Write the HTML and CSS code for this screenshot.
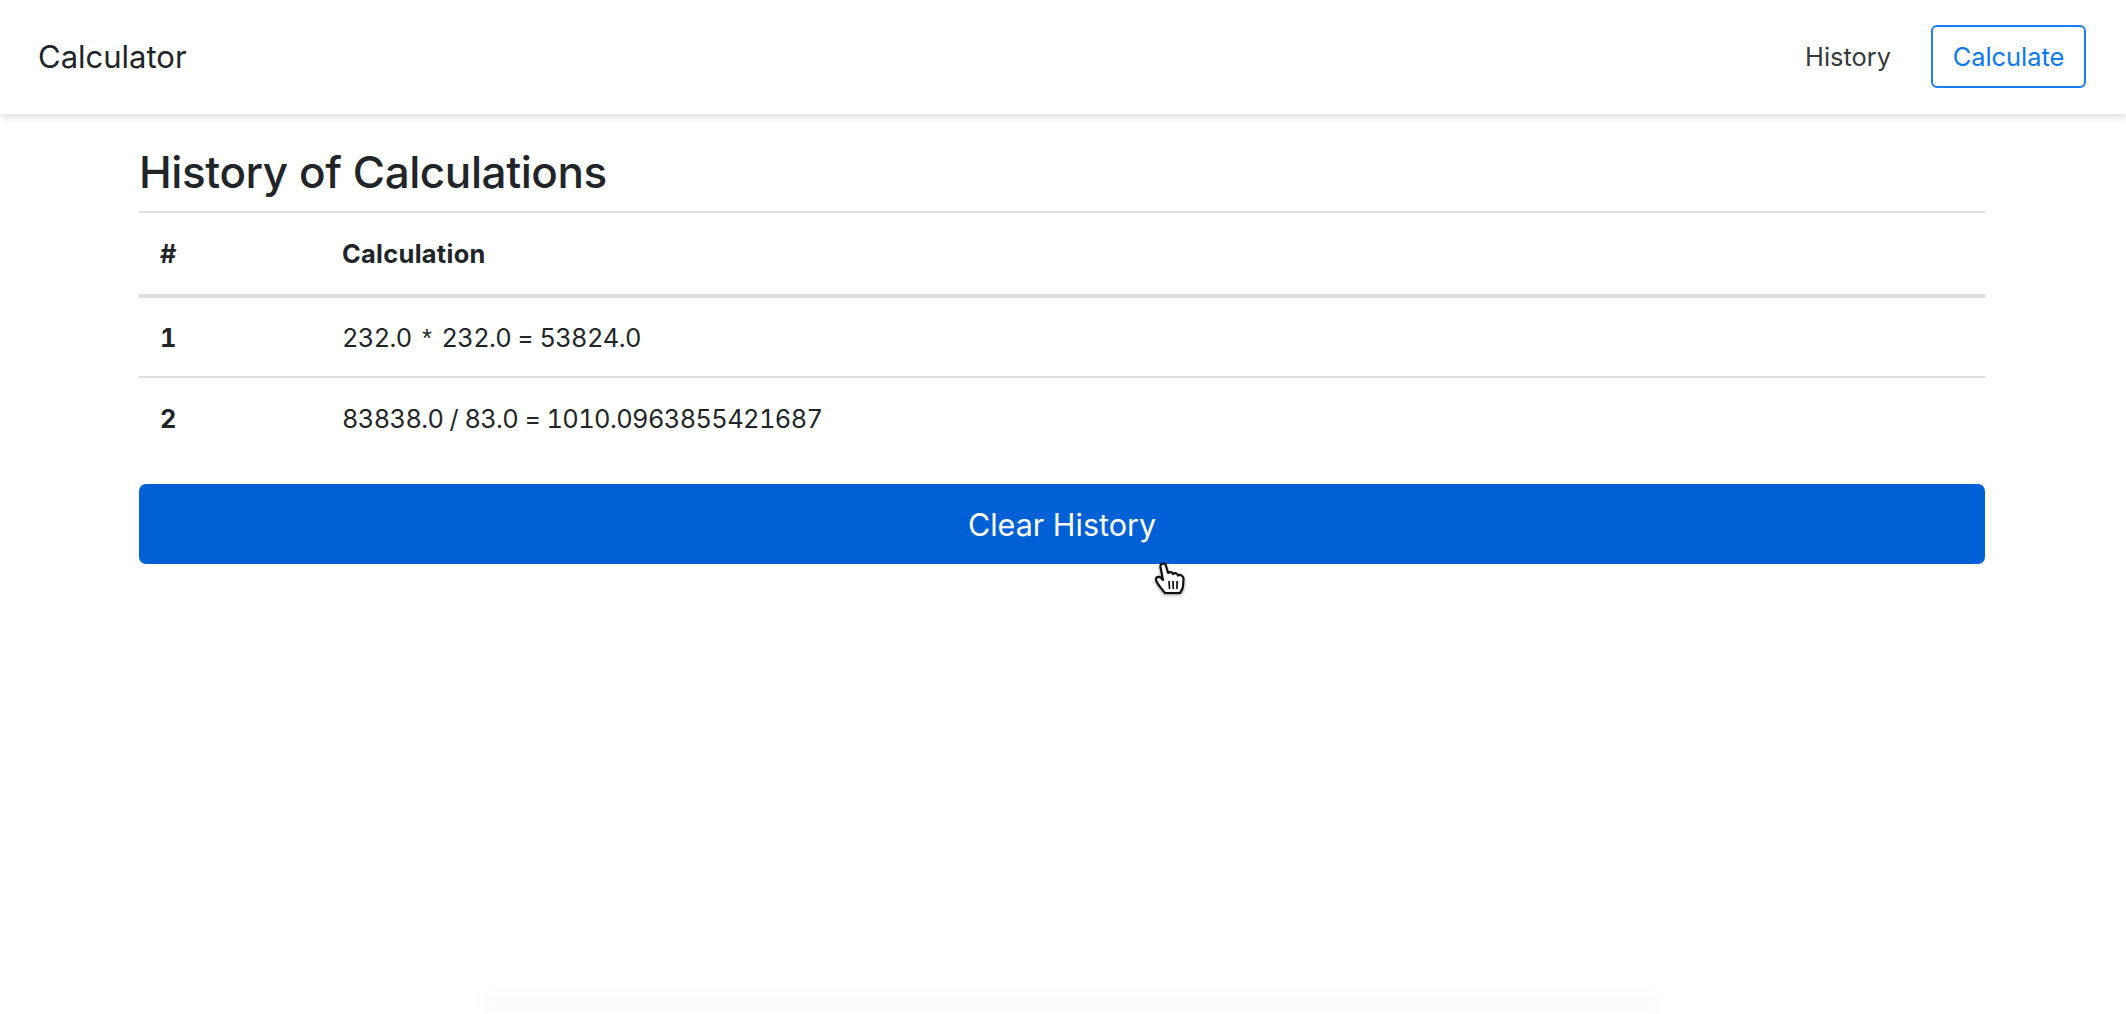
FILE: index.html
```html
<!DOCTYPE html>
<html lang="en">
<head>
<meta charset="utf-8">
<title>Calculator</title>
<link rel="stylesheet" href="styles.css">
</head>
<body>
<header class="navbar">
  <a class="brand" href="#">Calculator</a>
  <nav class="nav">
    <a class="nav-link" href="#">History</a>
    <a class="nav-btn" href="#">Calculate</a>
  </nav>
</header>
<main class="container">
  <h1 class="title">History of Calculations</h1>
  <table class="table">
    <thead>
      <tr><th class="col-num">#</th><th>Calculation</th></tr>
    </thead>
    <tbody>
      <tr><th class="col-num">1</th><td>232.0 <span class="op">*</span> 232.0 = 53824.0</td></tr>
      <tr><th class="col-num">2</th><td>83838.0 / 83.0 = 1010.0963855421687</td></tr>
    </tbody>
  </table>
  <button class="clear" type="button">Clear History</button>
</main>
<svg class="cursor" viewBox="0 0 30 34" width="30" height="34" aria-hidden="true">
  <path class="cursor-hand" d="M10 32 C7 28 2 23 1 19 C.5 16 4 15 6 17 L8 19 L5.5 6 C5 2 10.5 1.5 11 5 L13 12 C15 10.5 17 11 18 13 C20 11.5 22 12 23 14.5 C25.5 13 28.5 15 28.5 18 L28 25 C28 28 26 30 25 32 Z"/>
  <path class="cursor-lines" d="M14 20 L14.5 28 M18 20 L18.3 28 M22 20 L22 28"/>
</svg>
<div class="bottom-glow"></div>
</body>
</html>
```

FILE: styles.css
```css
* { box-sizing: border-box; }
html, body { height: 100%; }
body {
  margin: 0;
  background: #fff;
  color: #212529;
  font-family: Inter, "Liberation Sans", sans-serif;
  font-size: 25.4px;
  overflow: hidden;
  position: relative;
}
a { text-decoration: none; color: inherit; }

.navbar {
  height: 114px;
  display: flex;
  align-items: center;
  justify-content: space-between;
  padding: 0 40px 2px 38px;
  background: #fff;
  box-shadow: 0 2px 9px rgba(0, 0, 0, .16);
}
.brand { font-size: 31px; }
.nav { display: flex; align-items: center; gap: 40px; }
.nav-link { color: #343a40; }
.nav-btn {
  width: 155px;
  height: 63px;
  display: flex;
  align-items: center;
  justify-content: center;
  border: 2px solid #1a7df0;
  border-radius: 6px;
  color: #0a78f5;
}

.container {
  width: 1846px;
  margin-left: 139px;
}
.title {
  margin: 0;
  padding-top: 28px;
  height: 97px;
  font-size: 44px;
  line-height: 60px;
  font-weight: 500;
  letter-spacing: -.42px;
}
.table {
  width: 100%;
  border-collapse: collapse;
  font-variant-numeric: tabular-nums;
}
.table th, .table td {
  text-align: left;
  padding: 0 21px;
  height: 81px;
  border-top: 2px solid #dfdfdf;
}
.table td { letter-spacing: -.6px; }
.table th { font-weight: 700; letter-spacing: .3px; }
.table thead th { border-bottom: 4px solid #dfdfdf; height: 84px; }
.table thead + tbody tr:first-child th,
.table thead + tbody tr:first-child td { border-top: 0; }
.col-num { width: 182px; }
.op { font-family: "Liberation Sans", sans-serif; padding: 0 4px; }
.clear {
  display: block;
  width: 100%;
  height: 80px;
  margin-top: 26px;
  border: 0;
  border-radius: 7px;
  background: #0060d6;
  color: #fff;
  font-family: inherit;
  font-size: 30.5px;
}

.cursor {
  position: absolute;
  left: 1155px;
  top: 561px;
  filter: drop-shadow(0 1px 1.5px rgba(0, 0, 0, .45));
}
.cursor-hand { fill: #fff; stroke: #111; stroke-width: 2.2; stroke-linejoin: round; }
.cursor-lines { fill: none; stroke: #111; stroke-width: 1.7; }

.bottom-glow {
  position: absolute;
  left: 480px;
  right: 466px;
  bottom: 0;
  height: 30px;
  background: linear-gradient(#fff, #fafafa);
  filter: blur(6px);
}
```
